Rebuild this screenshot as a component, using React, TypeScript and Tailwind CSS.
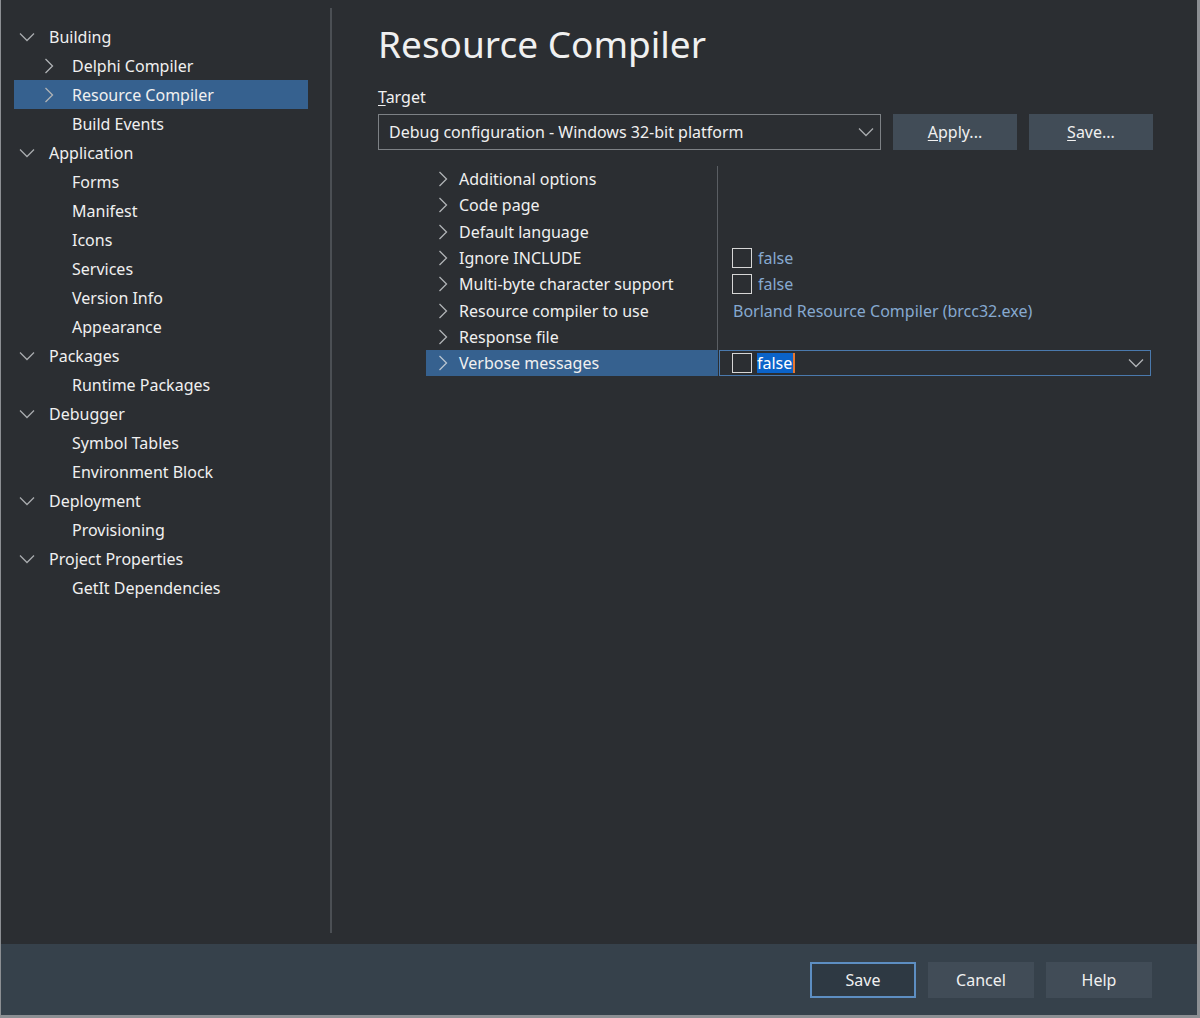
import React from "react";

type TreeItem = { label: string; level: 0 | 1; chevron?: "down" | "right"; selected?: boolean };

const tree: TreeItem[] = [
  { label: "Building", level: 0, chevron: "down" },
  { label: "Delphi Compiler", level: 1, chevron: "right" },
  { label: "Resource Compiler", level: 1, chevron: "right", selected: true },
  { label: "Build Events", level: 1 },
  { label: "Application", level: 0, chevron: "down" },
  { label: "Forms", level: 1 },
  { label: "Manifest", level: 1 },
  { label: "Icons", level: 1 },
  { label: "Services", level: 1 },
  { label: "Version Info", level: 1 },
  { label: "Appearance", level: 1 },
  { label: "Packages", level: 0, chevron: "down" },
  { label: "Runtime Packages", level: 1 },
  { label: "Debugger", level: 0, chevron: "down" },
  { label: "Symbol Tables", level: 1 },
  { label: "Environment Block", level: 1 },
  { label: "Deployment", level: 0, chevron: "down" },
  { label: "Provisioning", level: 1 },
  { label: "Project Properties", level: 0, chevron: "down" },
  { label: "GetIt Dependencies", level: 1 },
];

const props: { name: string; value?: string; check?: boolean }[] = [
  { name: "Additional options" },
  { name: "Code page" },
  { name: "Default language" },
  { name: "Ignore INCLUDE", value: "false", check: true },
  { name: "Multi-byte character support", value: "false", check: true },
  { name: "Resource compiler to use", value: "Borland Resource Compiler (brcc32.exe)" },
  { name: "Response file" },
];

const ChevronDown = ({ className = "" }: { className?: string }) => (
  <svg width="16" height="10" viewBox="0 0 16 10" className={className}>
    <path d="M1 1.5 L8 8.5 L15 1.5" fill="none" stroke="currentColor" strokeWidth="1.3" />
  </svg>
);

const ChevronRight = ({ className = "" }: { className?: string }) => (
  <svg width="10" height="16" viewBox="0 0 10 16" className={className}>
    <path d="M1.5 1 L8.5 8 L1.5 15" fill="none" stroke="currentColor" strokeWidth="1.3" />
  </svg>
);

const CheckBox = () => <span className="inline-block w-[20px] h-[20px] border-[1.5px] border-[#d6d6d6] shrink-0" />;

export default function App() {
  return (
    <div
      className="w-[1200px] h-[1018px] bg-[#2b2e32] text-[#f0f0f0] flex flex-col border-l border-r-[3px] border-b-[3px] border-[#8c8f93] overflow-hidden"
      style={{ fontFamily: '"Noto Sans", "Open Sans", sans-serif' }}
    >
      <div className="flex flex-1 min-h-0">
        {/* tree */}
        <div className="w-[331px] shrink-0 mt-[8px] mb-[11px] border-r-2 border-[#4b4f54] pt-[14px] pl-[13px] pr-[22px] text-[16px]">
          {tree.map((t) => (
            <div
              key={t.label}
              className={`h-[29px] flex items-center ${t.selected ? "bg-[#36618f]" : ""}`}
            >
              {t.level === 0 ? (
                <>
                  <span className="w-[35px] flex justify-start pl-[5px] text-[#a8abae]">
                    <ChevronDown />
                  </span>
                  <span>{t.label}</span>
                </>
              ) : (
                <>
                  <span className="w-[58px] flex justify-end pr-[18px] text-[#b0b3b6]">
                    {t.chevron === "right" ? <ChevronRight /> : null}
                  </span>
                  <span>{t.label}</span>
                </>
              )}
            </div>
          ))}
        </div>

        {/* content */}
        <div className="flex-1 min-w-0 pl-[46px]">
          <h1 className="text-[37px] leading-none mt-[25px] font-normal">Resource Compiler</h1>
          <div className="mt-[25px] text-[16px] leading-[20px]">
            <span className="underline underline-offset-2 decoration-1">T</span>arget
          </div>
          <div className="flex gap-[12px] mt-[7px] items-stretch">
            <div className="w-[503px] shrink-0 h-[36px] border border-[#7d8185] flex items-center justify-between pl-[10px] pr-[6px] text-[16px]">
              <span>Debug configuration - Windows 32-bit platform</span>
              <ChevronDown className="text-[#a8abae]" />
            </div>
            <button className="w-[124px] shrink-0 h-[36px] bg-[#414c57] text-[16px]">
              <span className="underline underline-offset-2 decoration-1">A</span>pply...
            </button>
            <button className="w-[124px] shrink-0 h-[36px] bg-[#414c57] text-[16px]">
              <span className="underline underline-offset-2 decoration-1">S</span>ave...
            </button>
          </div>

          {/* property grid */}
          <div className="mt-[16px] ml-[48px] w-[725px] text-[16px]">
            {props.map((p) => (
              <div key={p.name} className="h-[26.3px] flex">
                <div className="w-[292px] border-r border-[#5a5e63] flex items-center">
                  <span className="w-[33px] flex justify-end pr-[11px] text-[#b0b3b6]">
                    <ChevronRight />
                  </span>
                  <span>{p.name}</span>
                </div>
                <div className="flex-1 flex items-center pl-[14px] gap-[6px] text-[#86a9d0]">
                  {p.check ? <CheckBox /> : null}
                  {p.value ? <span className={p.check ? "" : "ml-[1px]"}>{p.value}</span> : null}
                </div>
              </div>
            ))}
            <div className="h-[26px] flex">
              <div className="w-[292px] bg-[#36618f] flex items-center">
                <span className="w-[33px] flex justify-end pr-[11px] text-[#b8c4d0]">
                  <ChevronRight />
                </span>
                <span>Verbose messages</span>
              </div>
              <div className="flex-1 ml-[1px] border border-[#4a79ad] flex items-center pl-[12px] pr-[6px]">
                <CheckBox />
                <span className="ml-[5px] bg-[#0b63c9] text-white leading-[20px] pr-[1px]">false</span>
                <span className="w-[2px] h-[20px] bg-[#e8772e]" />
                <span className="flex-1" />
                <ChevronDown className="text-[#b0b3b6]" />
              </div>
            </div>
          </div>
        </div>
      </div>

      {/* footer */}
      <div className="h-[71px] shrink-0 bg-[#36414b] flex items-center justify-end gap-[12px] pr-[45px] text-[16px]">
        <button className="w-[106px] h-[36px] border-2 border-[#5d8ec2] bg-[#2e3943]">Save</button>
        <button className="w-[106px] h-[36px] bg-[#414c57]">Cancel</button>
        <button className="w-[106px] h-[36px] bg-[#414c57]">Help</button>
      </div>
    </div>
  );
}
